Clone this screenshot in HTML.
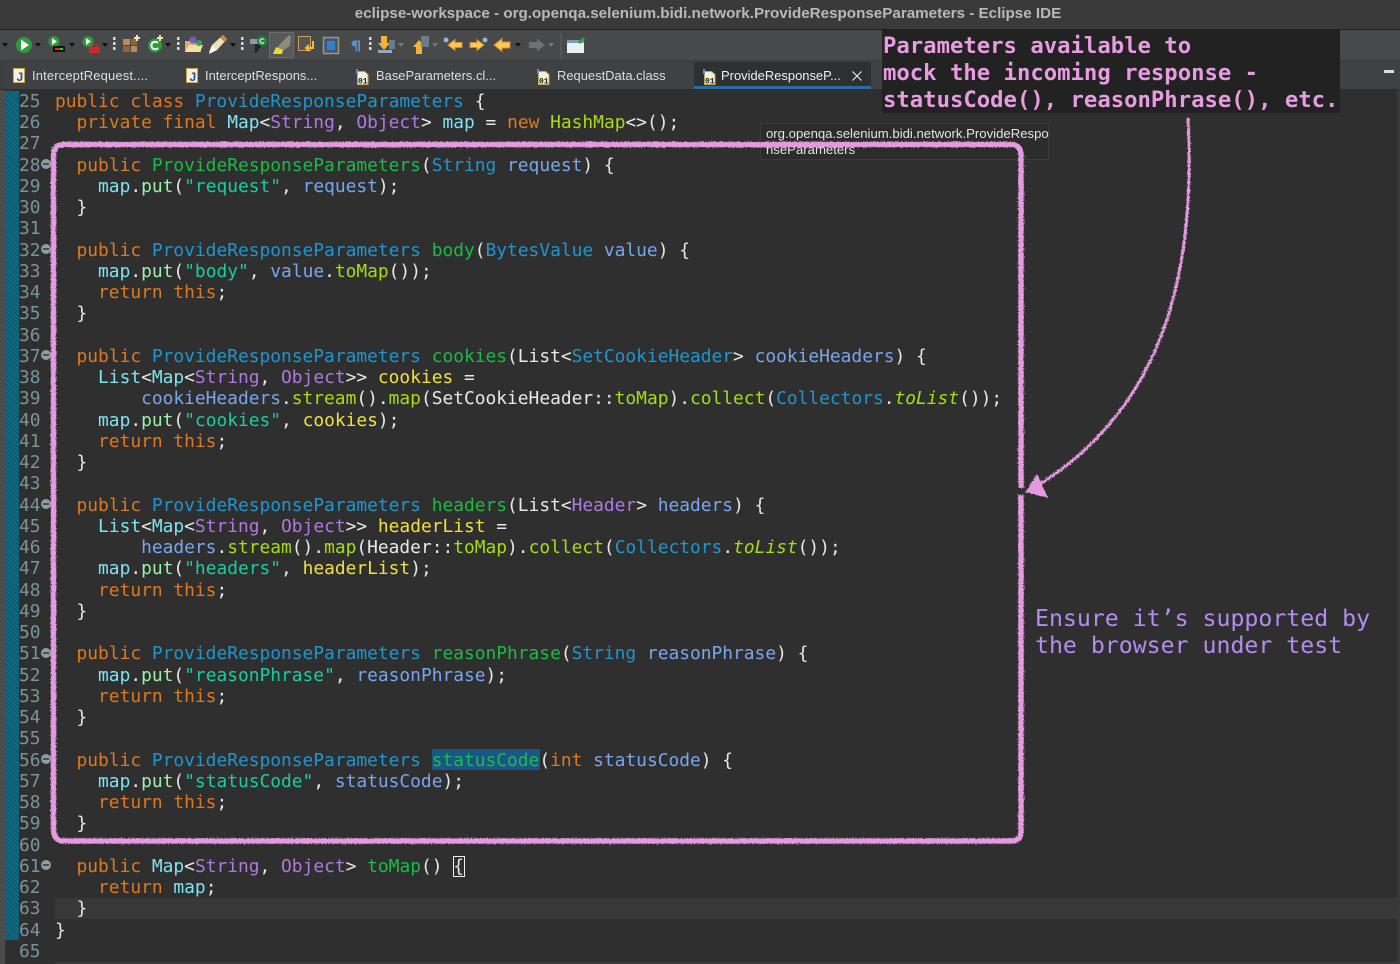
<!DOCTYPE html>
<html><head><meta charset="utf-8"><style>
html,body{margin:0;padding:0;width:1400px;height:964px;overflow:hidden;background:#2f2f2f}
.a{position:absolute}
pre{margin:0;font-family:"DejaVu Sans Mono","Liberation Mono",monospace;font-size:17.89px;line-height:21.25px}
#code{left:55px;top:90.8px;color:#e8e8e8}
#nums{left:19px;top:90.8px;color:#78949f}
.k{color:#dd7a1f}.c{color:#1c97cf}.t{color:#b079e0}.m{color:#7fe4f2}.g{color:#17bd45}.l{color:#a8dc10}.p{color:#9cf0b0}.s{color:#14cfa4}.v{color:#7aa6ee}.y{color:#f0e23c}.i{font-style:italic;color:#a8dc10}
.tab{position:absolute;top:68px;font:12.95px/16px "Liberation Sans",sans-serif;color:#dedede;white-space:nowrap}
</style></head><body>
<div class="a" style="left:0;top:0;width:1400px;height:29px;background:#3a3a3a;border-bottom:1px solid #1f1f1f"></div>
<div class="a" style="left:0;top:6px;width:1416px;text-align:center;font:bold 15.2px/16px 'Liberation Sans',sans-serif;color:#b9b9b9;white-space:nowrap">eclipse-workspace - org.openqa.selenium.bidi.network.ProvideResponseParameters - Eclipse IDE</div>
<div class="a" style="left:0;top:30px;width:1400px;height:32px;background:#47494b"></div>
<div class="a" style="left:0;top:60px;width:1400px;height:30px;background:#3c3e40"></div>
<div class="a" style="left:5px;top:62px;width:1395px;height:27px;background:#3f4143"></div>
<div class="a" style="left:694px;top:62px;width:177px;height:24px;background:#2e3032"></div>
<div class="a" style="left:694px;top:86px;width:177px;height:3px;background:#2a6da6"></div>
<svg class="a" style="left:0;top:30px" width="600" height="32" viewBox="0 30 600 32">
<g fill="#111"><path d="M2 43h6l-3 4zM35 43h6l-3 4zM69 43h6l-3 4zM102 43h6l-3 4zM165 43h6l-3 4zM230 43h6l-3 4zM515 43h6l-3 4z"/></g>
<g fill="#d8d8d8"><rect x="113" y="37" width="2.500" height="3"/><rect x="113" y="42" width="2.500" height="3"/><rect x="113" y="47" width="2.500" height="3"/><rect x="177" y="37" width="2.500" height="3"/><rect x="177" y="42" width="2.500" height="3"/><rect x="177" y="47" width="2.500" height="3"/><rect x="241" y="37" width="2.500" height="3"/><rect x="241" y="42" width="2.500" height="3"/><rect x="241" y="47" width="2.500" height="3"/><rect x="369" y="37" width="2.500" height="3"/><rect x="369" y="42" width="2.500" height="3"/><rect x="369" y="47" width="2.500" height="3"/></g>
<circle cx="24" cy="45" r="8" fill="#2d9a3c"/><path d="M21 39.500l8 5.500-8 5.500z" fill="#f4f4f4"/>
<circle cx="54" cy="41.500" r="5.500" fill="#2d9a3c"/><path d="M52 38l5 3.500-5 3.500z" fill="#f4f4f4"/><rect x="53" y="46" width="12" height="6" fill="#111"/><rect x="55" y="48" width="5" height="2" fill="#e22"/><rect x="60" y="48" width="3" height="2" fill="#2c2"/>
<circle cx="88" cy="41.500" r="5.500" fill="#2d9a3c"/><path d="M86 38l5 3.500-5 3.500z" fill="#f4f4f4"/><rect x="89" y="47" width="11" height="6" fill="#d4252a"/><path d="M92 47v-2h5v2" fill="none" stroke="#d4252a" stroke-width="1.300"/>
<rect x="123" y="39" width="7" height="6" fill="#b98a5e"/><rect x="131" y="39" width="6" height="6" fill="#8a6545"/><rect x="123" y="46" width="7" height="6" fill="#8a6545"/><rect x="131" y="46" width="6" height="6" fill="#b98a5e"/><path d="M134 38h6M137 35v6" stroke="#f0e6a0" stroke-width="2"/>
<circle cx="155" cy="45.500" r="7" fill="#2d9a3c"/><path d="M158 43a3.800 3.800 0 1 0 0 5" stroke="#fff" stroke-width="2" fill="none"/><path d="M157 38h6M160 35v6" stroke="#f0e6a0" stroke-width="2"/>
<path d="M185 52v-11h6l2 2h8v9z" fill="#d9b06a"/><path d="M185 52l4-7h14l-3 7z" fill="#f3dfa8"/><circle cx="193" cy="40" r="3.500" fill="#7a5cc0"/><circle cx="199" cy="43" r="3" fill="#3aa04a"/>
<path d="M209 52l3-7 11-10 4 4-10 11z" fill="#f0e2b8"/><path d="M209 54l3-8 5 4z" fill="#fff"/><path d="M220 38l5 4 2-3-4-4z" fill="#c78a30"/>
<path d="M250 39h10v5h-10z" fill="#8a9bb0"/><path d="M255 44h8l-7 9h-1z" fill="#222"/><circle cx="262" cy="41" r="5" fill="#1f8a3a"/><path d="M264 39.500a2.300 2.300 0 1 0 0 3" stroke="#fff" fill="none"/>
<rect x="269.500" y="32.500" width="24" height="25" fill="#56585a" stroke="#6a6c6e"/>
<path d="M277 50l2-5 10-10 2 2-1 9-8 5z" fill="#8d8a7a"/><path d="M273 54l3-7 7 3-1 4z" fill="#efdc2a"/>
<rect x="298.500" y="36.500" width="12" height="14" fill="#555" stroke="#c9a25e"/><path d="M313 41v7h-7m3-3l-3 3 3 3" stroke="#efb93a" stroke-width="2" fill="none"/>
<rect x="323.500" y="37.500" width="15" height="16" fill="#3c5a80" stroke="#a5976d" stroke-width="1.500"/><rect x="327" y="41" width="8" height="9" fill="#3a7ec0"/>
<path d="M360 40.500H354.500a3 3 0 0 0 0 6h1v5h1.500v-9.500h1.200v9.500h1.800z" fill="#5f8fc0"/>
<path d="M381 36h6v7h3l-6 7-6-7h3z" fill="#f2b233"/><rect x="378" y="50" width="14" height="3" fill="#8faac4"/><rect x="389" y="40" width="6" height="9" fill="#6b7c8c"/><path d="M398 43h6l-3 4z" fill="#777"/>
<path d="M416 54h6v-7h3l-6-7-6 7h3z" fill="#f2b233"/><rect x="421" y="36" width="8" height="11" fill="#6b7c8c"/><path d="M432 43h6l-3 4z" fill="#777"/>
<path d="M448 45l7-5.500v3h7v5h-7v3z" fill="#f7c95a" stroke="#d9891d"/><circle cx="446" cy="40" r="2.500" fill="#8fb4dc"/>
<path d="M484 45l-7-5.500v3h-7v5h7v3z" fill="#f7c95a" stroke="#d9891d"/><circle cx="485" cy="40" r="2.500" fill="#8fb4dc"/>
<path d="M494 45l8-6.500v3.500h8v6h-8v3.500z" fill="#f7c95a" stroke="#d9891d"/>
<path d="M545 45l-8-6.500v3.500h-8v6h8v3.500z" fill="#6e7072"/><path d="M548 43h6l-3 4z" fill="#777"/>
<rect x="560.500" y="33" width="1" height="25" fill="#5c5e60"/>
<rect x="567" y="40" width="17" height="13" fill="#e8eef2"/><rect x="567" y="40" width="17" height="3" fill="#7f9ab0"/><path d="M578 42l5-5 2 2-5 5z" fill="#2c9e3c"/>
</svg>
<svg class="a" style="left:0;top:62px" width="720" height="28" viewBox="0 62 720 28">
<rect x="13.500" y="68.500" width="11" height="14" fill="#f4f0dc" stroke="#c9a54e"/><text x="16.500" y="81" font-family="Liberation Sans" font-weight="bold" font-size="12" fill="#20509a">J</text>
<rect x="186.500" y="68.500" width="11" height="14" fill="#f4f0dc" stroke="#c9a54e"/><text x="189.500" y="81" font-family="Liberation Sans" font-weight="bold" font-size="12" fill="#20509a">J</text>
<path d="M357.500 71.500h7l3.500 3v10h-10.500z" fill="#f4f0dc" stroke="#c9a54e"/><text x="358" y="83.500" font-family="Liberation Mono" font-weight="bold" font-size="8" fill="#123">01</text><path d="M357 74v-5" stroke="#5b8fd0" stroke-width="2"/>
<path d="M538.500 71.500h7l3.500 3v10h-10.500z" fill="#f4f0dc" stroke="#c9a54e"/><text x="539" y="83.500" font-family="Liberation Mono" font-weight="bold" font-size="8" fill="#123">01</text><path d="M538 74v-5" stroke="#5b8fd0" stroke-width="2"/>
<path d="M704.500 71.500h7l3.500 3v10h-10.500z" fill="#f4f0dc" stroke="#c9a54e"/><text x="705" y="83.500" font-family="Liberation Mono" font-weight="bold" font-size="8" fill="#123">01</text><path d="M704 74v-5" stroke="#5b8fd0" stroke-width="2"/>
</svg>
<div class="tab" style="left:32px;letter-spacing:.16px">InterceptRequest....</div>
<div class="tab" style="left:205px">InterceptRespons...</div>
<div class="tab" style="left:376px">BaseParameters.cl...</div>
<div class="tab" style="left:557px">RequestData.class</div>
<div class="tab" style="left:721px;color:#efefef">ProvideResponseP...</div>
<svg class="a" style="left:851px;top:70px" width="12" height="12"><path d="M1.500 1.500l9 9M10.500 1.500l-9 9" stroke="#e8e8e8" stroke-width="1.200"/></svg>
<div class="a" style="left:1384px;top:70px;width:10px;height:3px;background:#ddd"></div>
<div class="a" style="left:0;top:89px;width:1400px;height:875px;background:#2f2f2f"></div>
<div class="a" style="left:0;top:90px;width:5px;height:874px;background:#4a4c4d"></div>
<div class="a" style="left:5px;top:91px;width:14px;height:849px;background:repeating-linear-gradient(45deg,#0b5a70 0 1.500px,#146b82 1.500px 3px)"></div>
<div class="a" style="left:55px;top:898px;width:1342px;height:21px;background:#383838"></div>
<div class="a" style="left:432px;top:749px;width:108px;height:21px;background:#1b5785"></div>
<div class="a" style="left:453px;top:856px;width:12px;height:21px;box-sizing:border-box;border:1px solid #eee"></div>
<div class="a" style="left:55px;top:962px;width:1345px;height:2px;background:#3c3c3c"></div>
<div class="a" style="left:1397px;top:90px;width:3px;height:874px;background:#3a3a3a"></div>
<pre class="a" id="nums">25
26
27
28
29
30
31
32
33
34
35
36
37
38
39
40
41
42
43
44
45
46
47
48
49
50
51
52
53
54
55
56
57
58
59
60
61
62
63
64
65</pre>
<svg class="a" style="left:40px;top:155px" width="14" height="730" viewBox="40 155 14 730"><g fill="#8f9ea5"><circle cx="46" cy="164" r="5"/><circle cx="46" cy="249" r="5"/><circle cx="46" cy="355" r="5"/><circle cx="46" cy="504" r="5"/><circle cx="46" cy="653" r="5"/><circle cx="46" cy="759" r="5"/><circle cx="46" cy="865" r="5"/></g><g stroke="#333" stroke-width="1.500"><path d="M43 164h6M43 249h6M43 355h6M43 504h6M43 653h6M43 759h6M43 865h6"/></g></svg>
<pre class="a" id="code"><span class="k">public class</span> <span class="c">ProvideResponseParameters</span> {
  <span class="k">private final</span> <span class="m">Map</span>&lt;<span class="t">String</span>, <span class="t">Object</span>&gt; <span class="m">map</span> = <span class="k">new</span> <span class="l">HashMap</span>&lt;&gt;();

  <span class="k">public</span> <span class="g">ProvideResponseParameters</span>(<span class="c">String</span> <span class="v">request</span>) {
    <span class="m">map</span>.<span class="p">put</span>(<span class="s">"request"</span>, <span class="v">request</span>);
  }

  <span class="k">public</span> <span class="c">ProvideResponseParameters</span> <span class="g">body</span>(<span class="c">BytesValue</span> <span class="v">value</span>) {
    <span class="m">map</span>.<span class="p">put</span>(<span class="s">"body"</span>, <span class="v">value</span>.<span class="l">toMap</span>());
    <span class="k">return this</span>;
  }

  <span class="k">public</span> <span class="c">ProvideResponseParameters</span> <span class="g">cookies</span>(List&lt;<span class="c">SetCookieHeader</span>&gt; <span class="v">cookieHeaders</span>) {
    <span class="m">List</span>&lt;<span class="m">Map</span>&lt;<span class="t">String</span>, <span class="t">Object</span>&gt;&gt; <span class="y">cookies</span> =
        <span class="v">cookieHeaders</span>.<span class="l">stream</span>().<span class="l">map</span>(SetCookieHeader::<span class="l">toMap</span>).<span class="l">collect</span>(<span class="c">Collectors</span>.<span class="i">toList</span>());
    <span class="m">map</span>.<span class="p">put</span>(<span class="s">"cookies"</span>, <span class="y">cookies</span>);
    <span class="k">return this</span>;
  }

  <span class="k">public</span> <span class="c">ProvideResponseParameters</span> <span class="g">headers</span>(List&lt;<span class="t">Header</span>&gt; <span class="v">headers</span>) {
    <span class="m">List</span>&lt;<span class="m">Map</span>&lt;<span class="t">String</span>, <span class="t">Object</span>&gt;&gt; <span class="y">headerList</span> =
        <span class="v">headers</span>.<span class="l">stream</span>().<span class="l">map</span>(Header::<span class="l">toMap</span>).<span class="l">collect</span>(<span class="c">Collectors</span>.<span class="i">toList</span>());
    <span class="m">map</span>.<span class="p">put</span>(<span class="s">"headers"</span>, <span class="y">headerList</span>);
    <span class="k">return this</span>;
  }

  <span class="k">public</span> <span class="c">ProvideResponseParameters</span> <span class="g">reasonPhrase</span>(<span class="c">String</span> <span class="v">reasonPhrase</span>) {
    <span class="m">map</span>.<span class="p">put</span>(<span class="s">"reasonPhrase"</span>, <span class="v">reasonPhrase</span>);
    <span class="k">return this</span>;
  }

  <span class="k">public</span> <span class="c">ProvideResponseParameters</span> <span class="g">statusCode</span>(<span class="k">int</span> <span class="v">statusCode</span>) {
    <span class="m">map</span>.<span class="p">put</span>(<span class="s">"statusCode"</span>, <span class="v">statusCode</span>);
    <span class="k">return this</span>;
  }

  <span class="k">public</span> <span class="m">Map</span>&lt;<span class="t">String</span>, <span class="t">Object</span>&gt; <span class="g">toMap</span>() {
    <span class="k">return</span> <span class="m">map</span>;
  }
}
</pre>
<div class="a" style="left:760px;top:123px;width:289px;height:37px;background:#2c2c2c;border:1px solid #3b3b3b;font:13.15px/15.500px 'Liberation Sans',sans-serif;color:#e4e4e4;padding:2px 0 0 5px;box-sizing:border-box;white-space:nowrap">org.openqa.selenium.bidi.network.ProvideRespo<br>nseParameters</div>
<div class="a" style="left:882px;top:30px;width:458px;height:83px;background:#222"></div>
<pre class="a" style="left:883px;top:32.500px;font-size:22.250px;line-height:27px;color:#e79be0;font-weight:bold">Parameters available to
mock the incoming response -
statusCode(), reasonPhrase(), etc.</pre>
<pre class="a" style="left:1035px;top:605px;font-size:23.200px;line-height:27px;color:#b48cf0">Ensure it’s supported by
the browser under test</pre>
<svg class="a" style="left:0;top:0" width="1400" height="964" viewBox="0 0 1400 964">
<defs><filter id="ch" x="-5%" y="-5%" width="110%" height="110%"><feTurbulence type="fractalNoise" baseFrequency="0.7" numOctaves="2" seed="4"/><feDisplacementMap in="SourceGraphic" scale="3.500"/></filter></defs>
<g filter="url(#ch)" fill="none" stroke="#e39adf">
<path d="M1021 488V155Q1021 144.500 1010 144.500H63Q53.500 145 53.500 155V830Q54 841 64 841H1010Q1021 841 1021 832V495" stroke-width="5.500"/>
<path d="M1188 118C1196 270 1165 405 1040 484" stroke-width="3"/>
<path d="M1026 492L1037 475L1047 497Z" fill="#e39adf" stroke-width="1"/>
</g></svg>
</body></html>
